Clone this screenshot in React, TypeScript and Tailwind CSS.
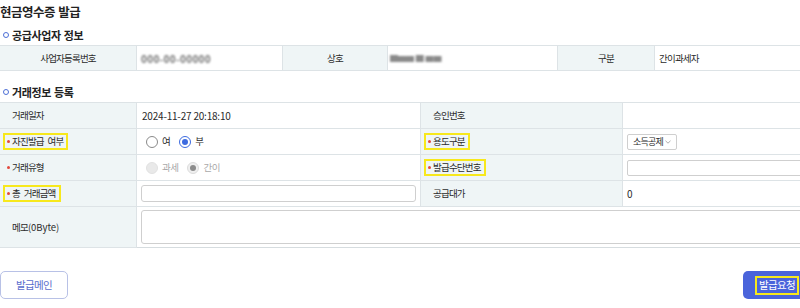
import React from 'react';

const font = { fontFamily: '"Noto Sans CJK KR", "Noto Sans", sans-serif' };

function Dot() {
  return <span className="inline-block w-[3px] h-[3px] rounded-full bg-[#e2483d] mr-[2px] shrink-0" />;
}

// label with optional required dot and optional yellow highlight
function Label({ text, req, hl, tail }: { text: string; req?: boolean; hl?: boolean; tail?: string }) {
  return (
    <div className="h-full flex items-center pl-[3px] bg-[#eff5f6] border-r border-b border-[#dde3e6]">
      <span
        className={
          'inline-flex items-center h-[17px] pl-[2px] pr-[3px] border-2 ' +
          (hl ? 'border-[#f7e81c]' : 'border-transparent')
        }
      >
        {req ? <Dot /> : <span className="w-[5px] shrink-0" />}
        <span className="text-[9.5px] tracking-[-0.8px] [word-spacing:2.5px] text-[#2b2b2b]">{text}</span>
        {tail && <span className="text-[9.5px] tracking-[0px] text-[#2b2b2b]">{tail}</span>}
      </span>
    </div>
  );
}

function Radio({ label, checked, disabled }: { label: string; checked?: boolean; disabled?: boolean }) {
  const ring = disabled
    ? checked
      ? 'border-[#dcdcdc] bg-[#efefef]'
      : 'border-[#e2e2e2] bg-[#e9e9e9]'
    : checked
      ? 'border-[#3d6be0] bg-white'
      : 'border-[#8a8a8a] bg-white';
  return (
    <span className="inline-flex items-center mr-[9px]">
      <span className={'w-[12px] h-[12px] rounded-full border flex items-center justify-center ' + ring}>
        {checked && (
          <span className={'w-[6px] h-[6px] rounded-full ' + (disabled ? 'bg-[#8c8c8c]' : 'bg-[#3d6be0]')} />
        )}
      </span>
      <span
        className={
          'ml-[4px] text-[9.5px] tracking-[-0.5px] ' + (disabled ? 'text-[#a9a9a9]' : 'text-[#2b2b2b]')
        }
      >
        {label}
      </span>
    </span>
  );
}

function Cell({ children, last, className = '' }: { children?: React.ReactNode; last?: boolean; className?: string }) {
  return (
    <div
      className={
        'h-full flex items-center bg-white border-b border-[#dde3e6] ' + (last ? '' : 'border-r ') + className
      }
    >
      {children}
    </div>
  );
}

function Heading({ text }: { text: string }) {
  return (
    <div className="h-[20px] flex items-center">
      <span className="ml-[3px] w-[6px] h-[6px] rounded-full border-[1.5px] border-[#4d6fd6]" />
      <span className="ml-[3px] text-[11px] font-bold tracking-[-0.4px] [word-spacing:1px] text-[#222]">{text}</span>
    </div>
  );
}

export default function App() {
  return (
    <div className="w-[800px] h-[308px] overflow-hidden bg-white" style={font}>
      <div className="w-[810px]">
        <div className="h-[25px] flex items-center">
          <h1 className="text-[12.5px] font-bold tracking-[-0.5px] [word-spacing:1px] text-[#222]">현금영수증 발급</h1>
        </div>

        <Heading text="공급사업자 정보" />

        {/* 공급사업자 정보 */}
        <div className="grid grid-cols-[137px_146px_105px_170px_97px_1fr] h-[26px] border-t border-[#dde3e6]">
          <div className="flex items-center justify-center bg-[#eff5f6] border-r border-b border-[#dde3e6]">
            <span className="text-[9.5px] tracking-[-0.8px] text-[#2b2b2b]">사업자등록번호</span>
          </div>
          <Cell className="pl-[4px]">
            <span className="text-[10px] font-bold tracking-[0.3px] text-[#6e6e6e] blur-[1.2px]">000-00-00000</span>
          </Cell>
          <div className="flex items-center justify-center bg-[#eff5f6] border-r border-b border-[#dde3e6]">
            <span className="text-[9.5px] tracking-[-0.8px] text-[#2b2b2b]">상호</span>
          </div>
          <Cell className="pl-[2px]">
            <span className="text-[8px] text-[#8a8a8a] blur-[1.2px]">▇▆▆ ▇ ▆▆</span>
          </Cell>
          <div className="flex items-center justify-center bg-[#eff5f6] border-r border-b border-[#dde3e6]">
            <span className="text-[9.5px] tracking-[-0.8px] text-[#2b2b2b]">구분</span>
          </div>
          <Cell last className="pl-[4px]">
            <span className="text-[9.5px] tracking-[-0.8px] text-[#2b2b2b]">간이과세자</span>
          </Cell>
        </div>

        <div className="h-[11px]" />
        <Heading text="거래정보 등록" />

        {/* 거래정보 등록 */}
        <div className="grid grid-cols-[137px_284px_202px_1fr] grid-rows-[26px_26px_26px_26px_41px] border-t border-[#dde3e6]">
          <Label text="거래일자" />
          <Cell className="pl-[5px]">
            <span className="text-[10px] tracking-[-0.2px] text-[#2b2b2b]">2024-11-27 20:18:10</span>
          </Cell>
          <Label text="승인번호" />
          <Cell last />

          <Label text="자진발급 여부" req hl />
          <Cell className="pl-[9px]">
            <Radio label="여" />
            <Radio label="부" checked />
          </Cell>
          <Label text="용도구분" req hl />
          <Cell last className="pl-[4px]">
            <div className="h-[16px] w-[50px] border border-[#cfcfcf] rounded-[2px] flex items-center pl-[5px]">
              <span className="text-[9px] tracking-[-0.8px] text-[#2b2b2b]">소득공제</span>
              <svg className="ml-[2px]" width="6" height="4" viewBox="0 0 6 4" fill="none">
                <path d="M0.5 0.8L3 3.2L5.5 0.8" stroke="#999" strokeWidth="0.8" />
              </svg>
            </div>
          </Cell>

          <Label text="거래유형" req />
          <Cell className="pl-[9px]">
            <Radio label="과세" disabled />
            <Radio label="간이" checked disabled />
          </Cell>
          <Label text="발급수단번호" req hl />
          <Cell last className="pl-[4px]">
            <div className="h-[16px] w-[200px] border border-[#cfcfcf] rounded-[2px] bg-white" />
          </Cell>

          <Label text="총 거래금액" req hl />
          <Cell className="pl-[4px] pr-[4px]">
            <div className="h-[17px] w-full border border-[#cfcfcf] rounded-[3px] bg-white" />
          </Cell>
          <Label text="공급대가" />
          <Cell last className="pl-[4px]">
            <span className="text-[10px] text-[#2b2b2b]">0</span>
          </Cell>

          <Label text="메모" tail="(0Byte)" />
          <div className="col-span-3 h-full flex items-center pl-[4px] bg-white border-b border-[#d6dcdf]">
            <div className="h-[34px] w-[700px] border border-[#cfcfcf] rounded-[3px] bg-white" />
          </div>
        </div>

        <div className="h-[23px]" />

        <div className="flex items-center justify-between pr-[2px]">
          <button className="h-[28px] w-[68px] rounded-[5px] border border-[#b8c1e6] bg-white flex items-center justify-center">
            <span className="text-[10.5px] tracking-[-0.7px] text-[#5a6ccd]">발급메인</span>
          </button>
          <button className="h-[28px] w-[65px] rounded-[5px] bg-[#4a64db] flex items-center pl-[12px]">
            <span className="inline-flex items-center h-[19px] px-[2px] border-2 border-[#f7e81c]">
              <span className="text-[10.5px] tracking-[-0.7px] text-white">발급요청</span>
            </span>
          </button>
        </div>
      </div>
    </div>
  );
}
